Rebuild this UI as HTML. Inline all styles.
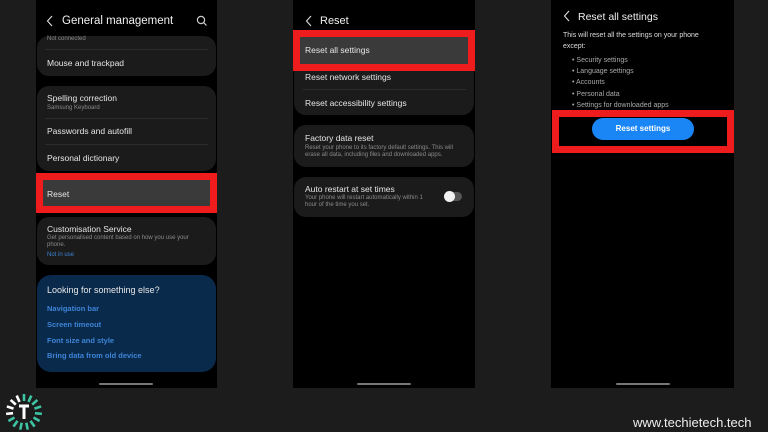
<!DOCTYPE html>
<html><head><style>
*{margin:0;padding:0;box-sizing:border-box}
body{width:768px;height:432px;background:#1c1c1c;position:relative;overflow:hidden;font-family:"Liberation Sans",sans-serif;color:#e8e8e8}
.a{position:absolute;white-space:nowrap}
.ph{position:absolute;top:0;height:388px;background:#000}
.card{position:absolute;background:#1b1b1b;border-radius:12px}
.t{font-size:8.5px;color:#e6e6e6}
.s{font-size:6px;color:#8a8a8a}
.div{position:absolute;height:1px;background:#2c2c2c}
.red{position:absolute;border:7px solid #ee1c1c}
.lk{font-size:7.5px;color:#3d84d6;font-weight:bold}
.bar{position:absolute;top:383px;height:2px;background:#777;border-radius:1px}
</style></head><body>

<!-- Left phone -->
<div class="ph" style="left:36px;width:181px"></div>
<svg class="a" style="left:46px;top:15px" width="8" height="12" viewBox="0 0 8 12"><path d="M6 1L1.5 6L6 11" fill="none" stroke="#ddd" stroke-width="1.1"/></svg>
<div class="a" style="left:62px;top:15px;font-size:11.5px;color:#f0f0f0">General management</div>
<svg class="a" style="left:196px;top:15px" width="12" height="12" viewBox="0 0 12 12"><circle cx="5" cy="5" r="3.6" fill="none" stroke="#ccc" stroke-width="1.2"/><line x1="7.6" y1="7.6" x2="10.5" y2="10.5" stroke="#ccc" stroke-width="1.2"/></svg>
<div class="card" style="left:37px;top:36px;width:179px;height:40px"></div>
<div class="a s" style="left:47px;top:36px">Not connected</div>
<div class="div" style="left:45px;top:49px;width:163px"></div>
<div class="a t" style="left:47px;top:58px">Mouse and trackpad</div>
<div class="card" style="left:37px;top:86px;width:179px;height:85px"></div>
<div class="a t" style="left:47px;top:93px">Spelling correction</div>
<div class="a s" style="left:47px;top:105px">Samsung Keyboard</div>
<div class="div" style="left:45px;top:118px;width:163px"></div>
<div class="a t" style="left:47px;top:126px">Passwords and autofill</div>
<div class="div" style="left:45px;top:144px;width:163px"></div>
<div class="a t" style="left:47px;top:153px">Personal dictionary</div>
<div class="red" style="left:36px;top:173px;width:181px;height:40px;background:#3a3a3a"></div>
<div class="a t" style="left:47px;top:189px">Reset</div>
<div class="card" style="left:37px;top:217px;width:179px;height:48px"></div>
<div class="a t" style="left:47px;top:224px">Customisation Service</div>
<div class="a s" style="left:47px;top:235px">Get personalised content based on how you use your</div>
<div class="a s" style="left:47px;top:242px">phone.</div>
<div class="a s" style="left:47px;top:252px;color:#3d84d6">Not in use</div>
<div class="card" style="left:37px;top:275px;width:179px;height:97px;background:#0a2a4c;border-radius:14px"></div>
<div class="a" style="left:47px;top:285px;font-size:9px;color:#e8e8e8">Looking for something else?</div>
<div class="a lk" style="left:47px;top:304px">Navigation bar</div>
<div class="a lk" style="left:47px;top:320px">Screen timeout</div>
<div class="a lk" style="left:47px;top:336px">Font size and style</div>
<div class="a lk" style="left:47px;top:351px">Bring data from old device</div>
<div class="bar" style="left:99px;width:54px"></div>

<!-- Middle phone -->
<div class="ph" style="left:293px;width:182px"></div>
<svg class="a" style="left:305px;top:15px" width="8" height="12" viewBox="0 0 8 12"><path d="M6 1L1.5 6L6 11" fill="none" stroke="#ddd" stroke-width="1.1"/></svg>
<div class="a" style="left:320px;top:15px;font-size:11px;color:#f0f0f0">Reset</div>
<div class="card" style="left:294px;top:60px;width:180px;height:55px"></div>
<div class="red" style="left:293px;top:30px;width:182px;height:41px;background:#3a3a3a"></div>
<div class="a t" style="left:305px;top:45px">Reset all settings</div>
<div class="a t" style="left:305px;top:72px">Reset network settings</div>
<div class="div" style="left:303px;top:89px;width:163px"></div>
<div class="a t" style="left:305px;top:98px">Reset accessibility settings</div>
<div class="card" style="left:294px;top:125px;width:180px;height:42px"></div>
<div class="a t" style="left:305px;top:133px">Factory data reset</div>
<div class="a s" style="left:305px;top:145px">Reset your phone to its factory default settings. This will</div>
<div class="a s" style="left:305px;top:152px">erase all data, including files and downloaded apps.</div>
<div class="card" style="left:294px;top:177px;width:180px;height:40px"></div>
<div class="a t" style="left:305px;top:184px">Auto restart at set times</div>
<div class="a s" style="left:305px;top:195px">Your phone will restart automatically within 1</div>
<div class="a s" style="left:305px;top:202px">hour of the time you set.</div>
<div class="a" style="left:445px;top:192px;width:17px;height:9px;border-radius:5px;background:#555"></div>
<div class="a" style="left:444px;top:191px;width:11px;height:11px;border-radius:6px;background:#f2f2f2"></div>
<div class="bar" style="left:357px;width:54px"></div>

<!-- Right phone -->
<div class="ph" style="left:551px;width:183px"></div>
<svg class="a" style="left:563px;top:10px" width="8" height="12" viewBox="0 0 8 12"><path d="M6 1L1.5 6L6 11" fill="none" stroke="#ddd" stroke-width="1.1"/></svg>
<div class="a" style="left:578px;top:11px;font-size:10.5px;color:#f0f0f0">Reset all settings</div>
<div class="a" style="left:563px;top:32px;font-size:7px;color:#ddd">This will reset all the settings on your phone</div>
<div class="a" style="left:563px;top:43px;font-size:7px;color:#ddd">except:</div>
<div class="a" style="left:572px;top:55px;font-size:7px;color:#aaa;line-height:11.2px">• Security settings<br>• Language settings<br>• Accounts<br>• Personal data<br>• Settings for downloaded apps</div>
<div class="red" style="left:552px;top:110px;width:182px;height:43px;background:#000"></div>
<div class="a" style="left:592px;top:118px;width:102px;height:22px;border-radius:11px;background:#1a86f5;color:#fff;font-size:8px;font-weight:bold;text-align:center;line-height:22px">Reset settings</div>
<div class="bar" style="left:616px;width:54px"></div>

<div class="a" style="left:633px;top:415px;font-size:13px;color:#eee">www.techietech.tech</div>

<svg class="a" style="left:4px;top:392px" width="40" height="40" viewBox="-20 -20 40 40">
<g stroke-width="2.6" stroke-linecap="butt">
<line x1="0" y1="-11" x2="0" y2="-18" stroke="#3cc4a4"/>
<line x1="0" y1="-11" x2="0" y2="-18" stroke="#3cc4a4" transform="rotate(24)"/>
<line x1="0" y1="-11" x2="0" y2="-18" stroke="#3cc4a4" transform="rotate(48)"/>
<line x1="0" y1="-11" x2="0" y2="-18" stroke="#3cc4a4" transform="rotate(72)"/>
<line x1="0" y1="-11" x2="0" y2="-18" stroke="#3cc4a4" transform="rotate(96)"/>
<line x1="0" y1="-11" x2="0" y2="-18" stroke="#3cc4a4" transform="rotate(120)"/>
<line x1="0" y1="-11" x2="0" y2="-18" stroke="#3cc4a4" transform="rotate(144)"/>
<line x1="0" y1="-11" x2="0" y2="-18" stroke="#3cc4a4" transform="rotate(168)"/>
<line x1="0" y1="-11" x2="0" y2="-18" stroke="#3cc4a4" transform="rotate(192)"/>
<line x1="0" y1="-11" x2="0" y2="-18" stroke="#3cc4a4" transform="rotate(216)"/>
<line x1="0" y1="-11" x2="0" y2="-18" stroke="#3cc4a4" transform="rotate(240)"/>
<line x1="0" y1="-11" x2="0" y2="-18" stroke="#fff" transform="rotate(264)"/>
<line x1="0" y1="-11" x2="0" y2="-18" stroke="#fff" transform="rotate(288)"/>
<line x1="0" y1="-11" x2="0" y2="-18" stroke="#fff" transform="rotate(312)"/>
<line x1="0" y1="-11" x2="0" y2="-18" stroke="#fff" transform="rotate(336)"/>
</g>
<path d="M-5 -6H5M0 -6V7" stroke="#fff" stroke-width="3" fill="none"/>
</svg>
</body></html>
